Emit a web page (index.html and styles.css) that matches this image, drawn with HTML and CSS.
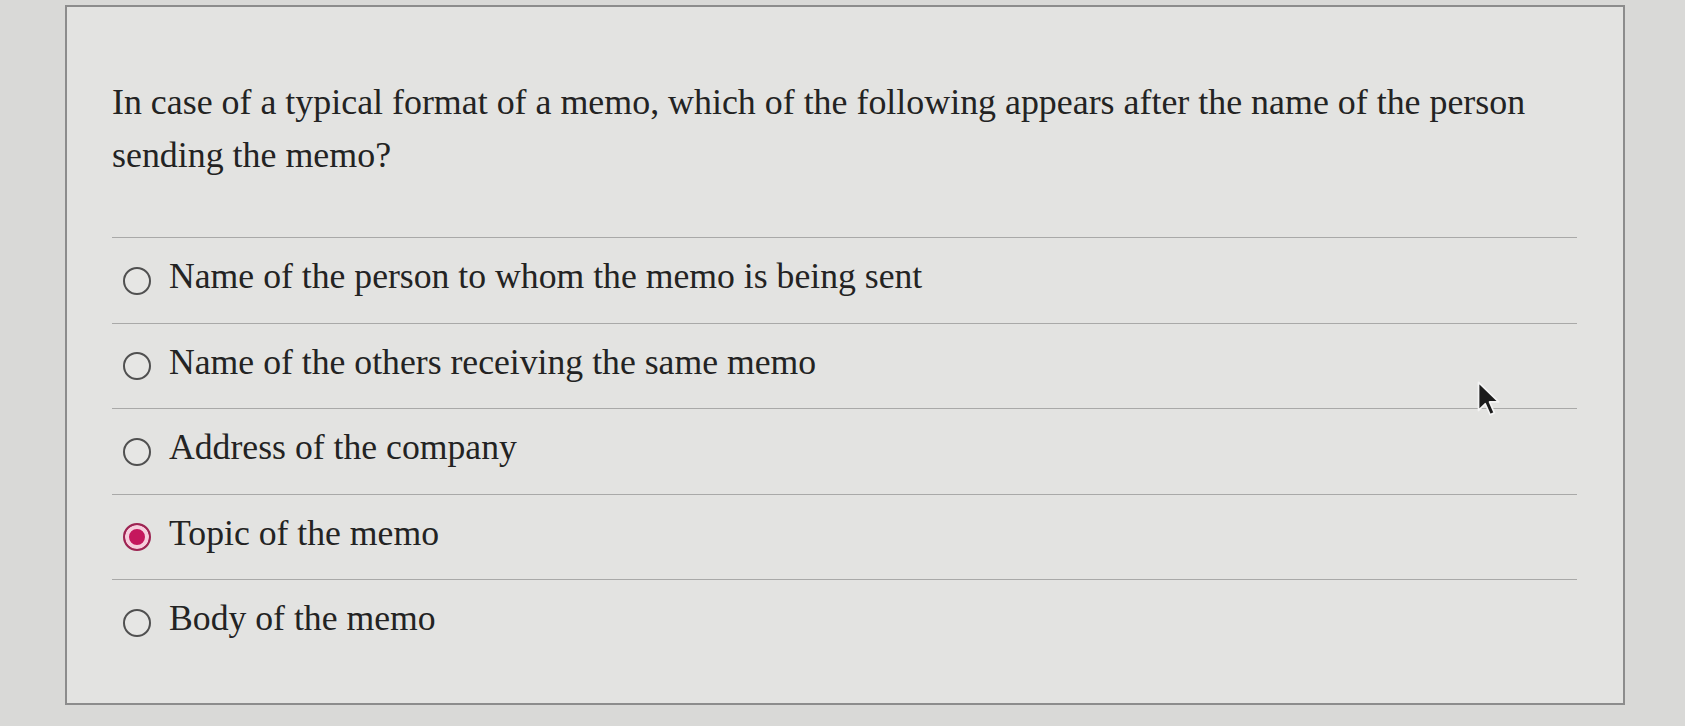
FILE: index.html
```html
<!DOCTYPE html>
<html lang="en">
<head>
<meta charset="utf-8">
<title>Memo question</title>
<link rel="stylesheet" href="styles.css">
</head>
<body>
<div class="screen">
  <div class="card">
    <p class="question">In case of a typical format of a memo, which of the following appears after the name of the person sending the memo?</p>
    <div class="options">
      <label class="opt"><span class="radio"></span><span class="text">Name of the person to whom the memo is being sent</span></label>
      <label class="opt"><span class="radio"></span><span class="text">Name of the others receiving the same memo</span></label>
      <label class="opt"><span class="radio"></span><span class="text">Address of the company</span></label>
      <label class="opt"><span class="radio checked"></span><span class="text">Topic of the memo</span></label>
      <label class="opt"><span class="radio"></span><span class="text">Body of the memo</span></label>
    </div>
  </div>
  <svg class="cursor" width="27" height="39" viewBox="0 0 22 32" aria-hidden="true">
    <path d="M2 2 L2 25 L7.5 19.5 L11.5 28.5 L15 27 L11 18 L18.5 18 Z" fill="#1b1b1b" stroke="#f4f4f4" stroke-width="1.4" stroke-linejoin="round"/>
  </svg>
</div>
</body>
</html>
```

FILE: styles.css
```css
html, body {
  margin: 0;
  padding: 0;
  background: #d9d9d7;
}

.screen {
  position: relative;
  width: 1685px;
  height: 726px;
  box-sizing: border-box;
  padding: 5px 0 0 65px;
  background: #d9d9d7;
  font-family: "Liberation Serif", "Times New Roman", serif;
  color: #232323;
}

.card {
  width: 1560px;
  height: 700px;
  box-sizing: border-box;
  border: 2px solid #8c8c8c;
  background: #e3e3e1;
  padding: 69px 46px 0 45px;
}

.question {
  margin: 0;
  font-size: 35.9px;
  line-height: 53px;
}

.options {
  margin-top: 55px;
}

.opt {
  display: flex;
  align-items: center;
  height: 85.5px;
  box-sizing: border-box;
  border-top: 1px solid #a9a9a8;
  padding-bottom: 8px;
  padding-left: 11px;
  font-size: 35.7px;
  line-height: 40px;
}

.radio {
  flex: none;
  width: 28px;
  height: 28px;
  box-sizing: border-box;
  border: 2px solid #505050;
  border-radius: 50%;
  margin-top: 9px;
  margin-right: 18px;
  background: #e6e6e4;
}

.radio.checked {
  border: 2px solid #9c2552;
  background: #c5175d;
  box-shadow: inset 0 0 0 4px #f6cddc;
}

.text {
  white-space: nowrap;
}

.cursor {
  position: absolute;
  left: 1476px;
  top: 380px;
}
```
